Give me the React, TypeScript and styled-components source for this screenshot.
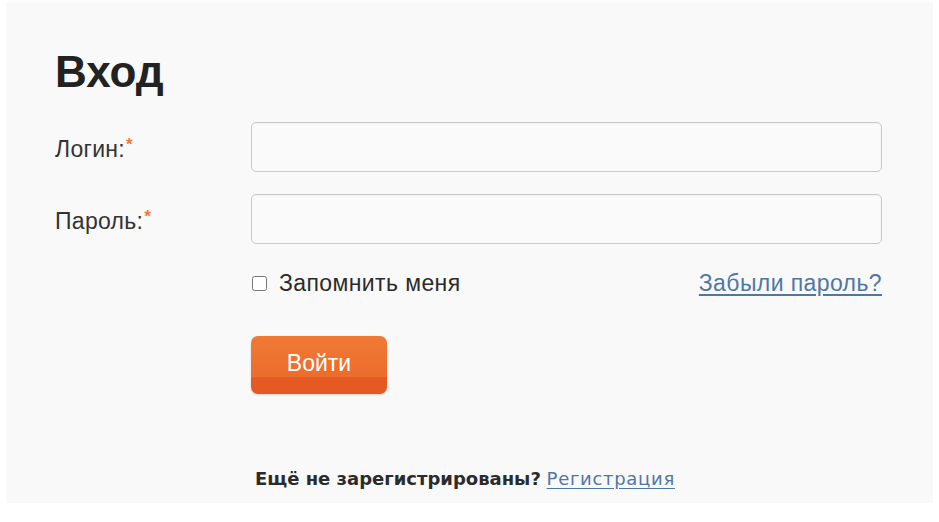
import React from 'react'
import styled, { createGlobalStyle } from 'styled-components'

const GlobalStyle = createGlobalStyle`
  html, body {
    margin: 0;
    padding: 0;
    background: #ffffff;
    font-family: "Liberation Sans", Arial, sans-serif;
    color: #2b2b2b;
  }
`

const Panel = styled.div`
  margin: 2px 6px 0 6px;
  height: 501px;
  box-sizing: border-box;
  background: #f9f9f9;
  padding: 45px 51px 0 49px;
`

const Title = styled.h1`
  margin: 0 0 25px 0;
  font-size: 44px;
  font-weight: bold;
  line-height: 50px;
  color: #222;
`

const Form = styled.form`
  display: grid;
  grid-template-columns: 196px 1fr;
  row-gap: 22px;
  align-items: center;
`

const Label = styled.label`
  font-size: 23px;
  color: #333;
  letter-spacing: 0.3px;
  padding-top: 4px;
`

const Required = styled.span`
  color: #f07a34;
  font-weight: bold;
  font-size: 17px;
  vertical-align: top;
  position: relative;
  top: -1px;
  margin-left: 1px;
`

const TextInput = styled.input`
  box-sizing: border-box;
  width: 100%;
  height: 50px;
  border: 1px solid #c9c9c9;
  border-radius: 5px;
  background: #fafafa;
  box-shadow: inset 0 1px 1px rgba(0, 0, 0, 0.04);
  outline: none;
`

const OptionsRow = styled.div`
  grid-column: 2;
  display: flex;
  justify-content: space-between;
  align-items: center;
  margin-top: 4px;
`

const Remember = styled.label`
  display: flex;
  align-items: center;
  gap: 12px;
  font-size: 23px;
  letter-spacing: 0.4px;
  color: #2b2b2b;
`

const Checkbox = styled.input`
  margin: 0 0 0 1px;
  width: 15px;
  height: 15px;
`

const Link = styled.a`
  color: #4f77a6;
  font-size: 23px;
  letter-spacing: 0.4px;
  text-decoration: underline;
  text-underline-offset: 3px;
`

const SubmitCell = styled.div`
  grid-column: 2;
  margin-top: 17px;
`

const SubmitButton = styled.button`
  width: 136px;
  height: 58px;
  border: none;
  border-radius: 7px;
  background: linear-gradient(to bottom, #f07a36 0%, #ec6c2c 70%, #e45a22 72%, #e45a22 100%);
  box-shadow: 0 1px 2px rgba(0, 0, 0, 0.15);
  color: #fff;
  font-family: "Liberation Sans", Arial, sans-serif;
  font-size: 23px;
  padding: 0 0 3px 0;
`

const Footer = styled.div`
  margin-top: 74px;
  padding-left: 200px;
  font-family: "DejaVu Sans", Verdana, sans-serif;
  font-size: 18px;
`

const FooterText = styled.span`
  font-weight: bold;
  color: #2b2b2b;
`

const FooterLink = styled.a`
  color: #4f77a6;
  letter-spacing: 0.7px;
  text-decoration: underline;
  text-underline-offset: 3px;
`

export default function App() {
  return (
    <>
      <GlobalStyle />
      <Panel>
        <Title>Вход</Title>
        <Form onSubmit={e => e.preventDefault()}>
          <Label htmlFor="login">
            Логин:<Required>*</Required>
          </Label>
          <TextInput id="login" type="text" />
          <Label htmlFor="password">
            Пароль:<Required>*</Required>
          </Label>
          <TextInput id="password" type="password" />
          <OptionsRow>
            <Remember>
              <Checkbox type="checkbox" />
              Запомнить меня
            </Remember>
            <Link href="#">Забыли пароль?</Link>
          </OptionsRow>
          <SubmitCell>
            <SubmitButton type="submit">Войти</SubmitButton>
          </SubmitCell>
        </Form>
        <Footer>
          <FooterText>Ещё не зарегистрированы?</FooterText> <FooterLink href="#">Регистрация</FooterLink>
        </Footer>
      </Panel>
    </>
  )
}
